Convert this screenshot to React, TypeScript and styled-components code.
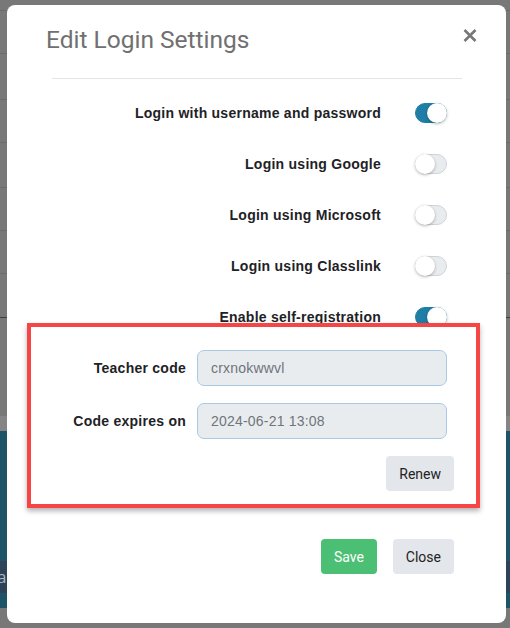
import React from 'react';
import styled, { createGlobalStyle } from 'styled-components';

const GlobalStyle = createGlobalStyle`
  html, body {
    margin: 0;
    padding: 0;
  }
  body {
    background: #787878;
    font-family: 'Liberation Sans', Arial, sans-serif;
  }
`;

const Screen = styled.div`
  position: relative;
  width: 510px;
  height: 628px;
  overflow: hidden;
  background: #787878;
`;

// page behind the overlay, only the edges show
const Backdrop = styled.div`
  display: flex;
  flex-direction: column;
`;

const Stripe = styled.div<{ $h: number; $bg?: string; $line?: string }>`
  flex-shrink: 0;
  box-sizing: border-box;
  height: ${(p) => p.$h}px;
  background: ${(p) => p.$bg ?? 'transparent'};
  border-bottom: ${(p) => (p.$line ? `1px solid ${p.$line}` : 'none')};
`;

const DarkBar = styled.div`
  flex-shrink: 0;
  height: 32px;
  background: #2f4358;
  color: #a9b6c4;
  font-family: 'Open Sans', sans-serif;
  font-size: 17px;
  line-height: 32px;
  text-indent: -3px;
`;

const Modal = styled.div`
  position: absolute;
  left: 7px;
  top: 5px;
  width: 499px;
  height: 618px;
  box-sizing: border-box;
  background: #fff;
  border-radius: 8px;
  display: flex;
  flex-direction: column;
`;

const Header = styled.div`
  display: flex;
  justify-content: space-between;
  align-items: flex-start;
  padding: 20px 29px 0 39px;
`;

const Title = styled.h4`
  margin: 0;
  font-family: Roboto, 'Liberation Sans', sans-serif;
  font-weight: 400;
  font-size: 24.5px;
  line-height: 29px;
  color: #707070;
`;

const CloseX = styled.button`
  margin-top: 4px;
  padding: 0;
  border: none;
  background: none;
  width: 14px;
  height: 13px;
  display: flex;
  color: #777;
  cursor: pointer;
`;

const Divider = styled.div`
  height: 1px;
  margin: 24px 44px 0 45px;
  background: #e5e5e5;
`;

const Options = styled.div`
  display: flex;
  flex-direction: column;
  gap: 17px;
  margin-top: 17px;
`;

const OptionRow = styled.div`
  height: 34px;
  display: flex;
  justify-content: flex-end;
  align-items: center;
  gap: 34px;
  padding-right: 59px;
`;

const Label = styled.label`
  font-family: 'Liberation Sans', Arial, sans-serif;
  font-weight: 700;
  font-size: 14px;
  letter-spacing: 0.25px;
  color: #1e2226;
  text-align: right;
`;

const Track = styled.span<{ $on: boolean }>`
  position: relative;
  width: 32px;
  height: 20px;
  box-sizing: border-box;
  border-radius: 10px;
  background: ${(p) => (p.$on ? '#1f7ea5' : '#e9ecef')};
  border: 1px solid ${(p) => (p.$on ? '#1f7ea5' : '#cfd4d9')};
`;

const Knob = styled.span<{ $on: boolean }>`
  position: absolute;
  top: -1px;
  left: ${(p) => (p.$on ? '11px' : '-1px')};
  width: 20px;
  height: 20px;
  border-radius: 50%;
  background: #fff;
  box-shadow: 0 1px 3px rgba(0, 0, 0, 0.3);
`;

const CodeBox = styled.section`
  position: relative;
  margin: -11px 26px 0 20px;
  padding: 23px 22px 13px 0;
  border: 4px solid #f64545;
  box-shadow: 0 3px 5px rgba(0, 0, 0, 0.3);
  display: flex;
  flex-direction: column;
  gap: 17px;
  background: #fff;
`;

const FieldRow = styled.div`
  display: grid;
  grid-template-columns: 1fr 250px;
  column-gap: 11px;
  align-items: center;
  margin-right: 7px;
`;

const Input = styled.input`
  height: 36px;
  box-sizing: border-box;
  border: 1px solid #a8c9e7;
  border-radius: 7px;
  background: #e9ecef;
  padding: 0 13px;
  font-family: 'Liberation Sans', Arial, sans-serif;
  font-size: 14px;
  letter-spacing: 0.2px;
  color: #6f757b;
  outline: none;
`;

const Actions = styled.div<{ $gap?: number }>`
  display: flex;
  justify-content: flex-end;
  gap: ${(p) => p.$gap ?? 0}px;
`;

const Button = styled.button<{ $primary?: boolean }>`
  height: 35px;
  padding: 0 13px;
  border: none;
  border-radius: 4px;
  font-family: Roboto, 'Liberation Sans', sans-serif;
  font-size: 14px;
  background: ${(p) => (p.$primary ? '#4bbf73' : '#e3e6ea')};
  color: ${(p) => (p.$primary ? '#fff' : '#222')};
  cursor: pointer;
`;

const Footer = styled(Actions)`
  margin-top: 31px;
  padding-right: 52px;
`;

const options = [
  { label: 'Login with username and password', on: true },
  { label: 'Login using Google', on: false },
  { label: 'Login using Microsoft', on: false },
  { label: 'Login using Classlink', on: false },
  { label: 'Enable self-registration', on: true },
];

function Switch({ on }: { on: boolean }) {
  return (
    <Track $on={on}>
      <Knob $on={on} />
    </Track>
  );
}

export default function App() {
  return (
    <Screen>
      <GlobalStyle />
      <Backdrop>
        <Stripe $h={11} $line="#6b6b6b" />
        <Stripe $h={43} $line="#6b6b6b" />
        <Stripe $h={46} $line="#6b6b6b" />
        <Stripe $h={43} $line="#6b6b6b" />
        <Stripe $h={45} $line="#6b6b6b" />
        <Stripe $h={43} $line="#6b6b6b" />
        <Stripe $h={43} $line="#6b6b6b" />
        <Stripe $h={44} $line="#3f3f3f" />
        <Stripe $h={98} />
        <Stripe $h={15} $bg="#858585" />
        <Stripe $h={130} $bg="#1f5468" />
        <DarkBar>ar</DarkBar>
        <Stripe $h={15} $bg="#1f5468" />
      </Backdrop>
      <Modal>
        <Header>
          <Title>Edit Login Settings</Title>
          <CloseX aria-label="Close">
            <svg width="14" height="13" viewBox="0 0 14 13">
              <path d="M1.5 1 L12.5 12 M12.5 1 L1.5 12" stroke="currentColor" strokeWidth="2.6" strokeLinecap="butt" />
            </svg>
          </CloseX>
        </Header>
        <Divider />
        <Options>
          {options.map((o) => (
            <OptionRow key={o.label}>
              <Label>{o.label}</Label>
              <Switch on={o.on} />
            </OptionRow>
          ))}
        </Options>
        <CodeBox>
          <FieldRow>
            <Label>Teacher code</Label>
            <Input readOnly value="crxnokwwvl" />
          </FieldRow>
          <FieldRow>
            <Label>Code expires on</Label>
            <Input readOnly value="2024-06-21 13:08" />
          </FieldRow>
          <Actions>
            <Button>Renew</Button>
          </Actions>
        </CodeBox>
        <Footer $gap={16}>
          <Button $primary>Save</Button>
          <Button>Close</Button>
        </Footer>
      </Modal>
    </Screen>
  );
}
